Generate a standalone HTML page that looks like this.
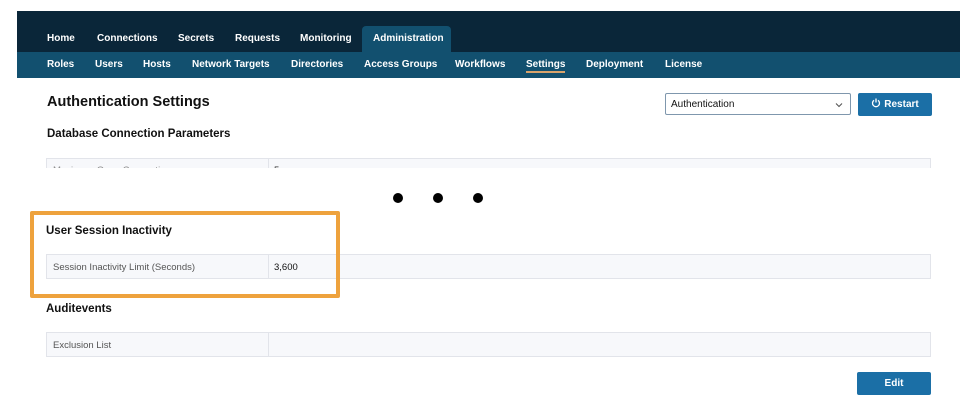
<!DOCTYPE html>
<html><head><style>
*{box-sizing:border-box;margin:0;padding:0}
body{width:960px;height:408px;background:#fff;font-family:"Liberation Sans",sans-serif;position:relative;overflow:hidden;color:#111}
.abs{position:absolute}
.top{left:17px;top:11px;width:943px;height:41px;background:#0a2639}
.sub{left:17px;top:52px;width:943px;height:26px;background:#12506f}
.nav{font-size:10px;font-weight:bold;color:#fff;position:absolute}
.tab{left:362px;top:26px;width:89px;height:26px;background:#12506f;border-radius:4px 4px 0 0}
.h1{position:absolute;font-size:14.5px;font-weight:700;color:#111}
h2{position:absolute;font-size:11.5px;font-weight:bold}
.row{position:absolute;left:46px;width:885px;border:1px solid #e2e4ea;background:#f7f8fb;font-size:9.5px;color:#555}
.row .c{position:absolute;left:221px;top:0;bottom:0;border-left:1px solid #e2e4ea}
.btn{position:absolute;background:#1b6fa6;color:#fff;font-size:10px;font-weight:bold;border-radius:2px;text-align:center}
.dot{position:absolute;width:10px;height:10px;border-radius:50%;background:#000;top:193px}
</style></head><body>
<div class="abs top"></div>
<div class="abs tab"></div>
<div class="abs sub"></div>
<span class="nav" style="left:47px;top:33px">Home</span>
<span class="nav" style="left:97px;top:33px">Connections</span>
<span class="nav" style="left:178px;top:33px">Secrets</span>
<span class="nav" style="left:235px;top:33px">Requests</span>
<span class="nav" style="left:300px;top:33px">Monitoring</span>
<span class="nav" style="left:373px;top:33px">Administration</span>
<span class="nav" style="left:47px;top:59px">Roles</span>
<span class="nav" style="left:95px;top:59px">Users</span>
<span class="nav" style="left:143px;top:59px">Hosts</span>
<span class="nav" style="left:192px;top:59px">Network Targets</span>
<span class="nav" style="left:291px;top:59px">Directories</span>
<span class="nav" style="left:364px;top:59px">Access Groups</span>
<span class="nav" style="left:455px;top:59px">Workflows</span>
<span class="nav" style="left:526px;top:59px;border-bottom:2px solid #d9a36b;padding-bottom:1px">Settings</span>
<span class="nav" style="left:586px;top:59px">Deployment</span>
<span class="nav" style="left:665px;top:59px">License</span>

<div class="h1" style="left:47px;top:94px"><b>Authentication Settings</b></div>
<div class="abs" style="left:665px;top:93px;width:186px;height:22px;border:1px solid #7f97ad;border-radius:2px;font-size:10px;padding:5px 5px">Authentication<svg width="8" height="6" viewBox="0 0 8 6" style="position:absolute;right:7px;top:8px"><path d="M1 1.5L4 4.5L7 1.5" stroke="#555" stroke-width="1.1" fill="none"/></svg></div>
<div class="btn" style="left:858px;top:93px;width:74px;height:23px;line-height:23px"><svg width="10" height="10" viewBox="0 0 10 10" style="vertical-align:-1px;margin-right:3px"><path d="M3 2.3A3.5 3.5 0 1 0 7 2.3M5 0.5V4.5" stroke="#fff" stroke-width="1.3" fill="none"/></svg>Restart</div>
<h2 style="left:47px;top:128px">Database Connection Parameters</h2>
<div class="abs" style="left:46px;top:158px;width:885px;height:10px;border:1px solid #e2e4ea;border-bottom:none;background:#f7f8fb;overflow:hidden;font-size:9.5px;color:#888"><span style="position:absolute;left:6px;top:6px">Maximum Open Connections</span><div style="position:absolute;left:221px;top:0;height:10px;border-left:1px solid #e2e4ea"></div><span style="position:absolute;left:227px;top:6px;color:#333">5</span></div>

<div class="dot" style="left:393px"></div>
<div class="dot" style="left:433px"></div>
<div class="dot" style="left:473px"></div>

<h2 style="left:46px;top:225px">User Session Inactivity</h2>
<div class="row" style="top:254px;height:25px"><span style="position:absolute;left:6px;top:7px">Session Inactivity Limit (Seconds)</span><div class="c"></div><span style="position:absolute;left:227px;top:7px;color:#111">3,600</span></div>
<div class="abs" style="left:30px;top:211px;width:310px;height:87px;border:4px solid #eea23d;border-radius:2px"></div>

<h2 style="left:46px;top:303px">Auditevents</h2>
<div class="row" style="top:332px;height:25px"><span style="position:absolute;left:6px;top:7px">Exclusion List</span><div class="c"></div></div>
<div class="btn" style="left:857px;top:372px;width:74px;height:23px;line-height:23px">Edit</div>
</body></html>
